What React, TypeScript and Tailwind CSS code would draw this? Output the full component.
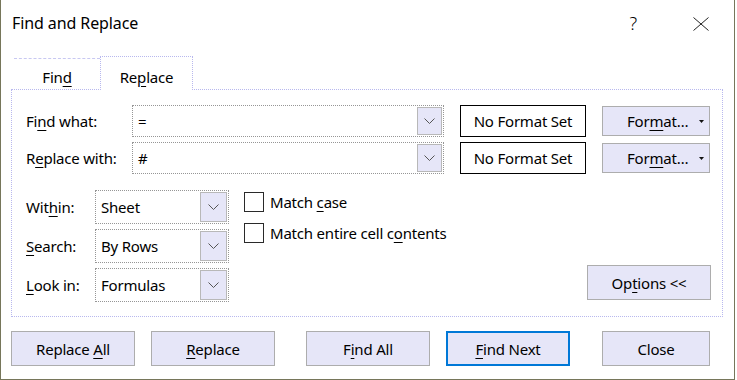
import React from 'react';

const fill = 'bg-[#e6e6f8]';

function U({ children }: { children: React.ReactNode }) {
  return <span className="underline decoration-1 underline-offset-[3px]">{children}</span>;
}

function Chevron() {
  return (
    <svg width="11" height="6" viewBox="0 0 11 6" fill="none">
      <path d="M0.5 0.5 L5.5 5.5 L10.5 0.5" stroke="#555" strokeWidth="1" />
    </svg>
  );
}

function Combo({ value, className, btnClass }: { value: string; className: string; btnClass: string }) {
  return (
    <div className={`flex items-stretch border border-dotted border-[#969696] bg-white p-px ${className}`}>
      <div className="flex flex-1 items-center pl-[4px]">{value}</div>
      <div className={`flex items-center justify-center border border-[#b8b8b8] ${fill} ${btnClass}`}>
        <Chevron />
      </div>
    </div>
  );
}

function Btn({
  children,
  className = '',
  focused = false,
}: {
  children: React.ReactNode;
  className?: string;
  focused?: boolean;
}) {
  return (
    <div
      className={`flex items-center justify-center ${
        focused ? 'border-2 border-[#0078d7]' : 'border border-[#adadad]'
      } ${fill} ${className}`}
    >
      {children}
    </div>
  );
}

function FormatBtn() {
  return (
    <div className={`flex h-[30px] w-[108px] items-center border border-[#adadad] pl-[24px] pr-[5px] ${fill}`}>
      <span>
        For<U>m</U>at…
      </span>
      <svg className="ml-auto" width="5" height="3" viewBox="0 0 5 3">
        <path d="M0 0 H5 L2.5 3 Z" fill="#111" />
      </svg>
    </div>
  );
}

function Check({ children }: { children: React.ReactNode }) {
  return (
    <div className="flex h-[20px] items-center">
      <div className="h-[20px] w-[20px] border border-[#2a2a2a] bg-white" />
      <span className="ml-[6px]">{children}</span>
    </div>
  );
}

export default function App() {
  return (
    <div className="h-[380px] w-[737px] overflow-hidden bg-white font-['Noto_Sans',sans-serif] text-[15px] leading-[20px] tracking-[-0.2px] text-black">
      <div className="flex h-[380px] w-[735px] flex-col border-b border-l border-r border-[#76765a] bg-white">
        {/* title bar */}
        <div className="flex h-[56px] items-start pl-[11px] pr-[25px] pt-[12px]">
          <span className="text-[16px] leading-[22px] tracking-[-0.1px]">Find and Replace</span>
          <span className="ml-auto text-[18px] font-light leading-[22px]">?</span>
          <svg className="ml-[56px] mt-[5px]" width="16" height="14" viewBox="0 0 16 14" fill="none">
            <path d="M0.5 0.5 L15.5 13.5 M15.5 0.5 L0.5 13.5" stroke="#222" strokeWidth="1" />
          </svg>
        </div>

        {/* tabs */}
        <div className="relative z-10 -mb-px flex h-[34px] pl-[13px]">
          <div className="mt-[2px] flex w-[86px] justify-center border-t border-dashed border-[#c8c8f2] pt-[8px]">
            <span>
              Fin<U>d</U>
            </span>
          </div>
          <div className="flex w-[93px] justify-center border-l border-r border-t border-dotted border-[#b8b8ee] bg-white pt-[10px]">
            <span>
              Re<U>p</U>lace
            </span>
          </div>
        </div>

        {/* panel */}
        <div className="ml-[10px] flex h-[228px] w-[712px] flex-col border border-dotted border-[#b8b8ee] pl-[14px] pr-[11px] pt-[15px]">
          <div className="flex h-[32px] items-center">
            <div className="w-[106px]">
              Fi<U>n</U>d what:
            </div>
            <Combo value="=" className="h-[32px] w-[312px]" btnClass="w-[25px]" />
            <div className="ml-[16px] flex h-[32px] w-[126px] items-center justify-center border border-black">
              No Format Set
            </div>
            <div className="ml-[16px]">
              <FormatBtn />
            </div>
          </div>
          <div className="mt-[5px] flex h-[32px] items-center">
            <div className="w-[106px]">
              R<U>e</U>place with:
            </div>
            <Combo value="#" className="h-[32px] w-[312px]" btnClass="w-[25px]" />
            <div className="ml-[16px] flex h-[32px] w-[126px] items-center justify-center border border-black">
              No Format Set
            </div>
            <div className="ml-[16px]">
              <FormatBtn />
            </div>
          </div>

          <div className="mt-[16px] flex h-[112px]">
            <div className="flex flex-col gap-[5px]">
              <div className="flex h-[34px] items-center">
                <div className="w-[69px]">
                  Wit<U>h</U>in:
                </div>
                <Combo value="Sheet" className="h-[34px] w-[134px]" btnClass="w-[27px]" />
              </div>
              <div className="flex h-[34px] items-center">
                <div className="w-[69px]">
                  <U>S</U>earch:
                </div>
                <Combo value="By Rows" className="h-[34px] w-[134px]" btnClass="w-[27px]" />
              </div>
              <div className="flex h-[34px] items-center">
                <div className="w-[69px]">
                  <U>L</U>ook in:
                </div>
                <Combo value="Formulas" className="h-[34px] w-[134px]" btnClass="w-[27px]" />
              </div>
            </div>

            <div className="ml-[15px] flex flex-col gap-[11px] pt-[2px]">
              <Check>
                Match <U>c</U>ase
              </Check>
              <Check>
                Match entire cell c<U>o</U>ntents
              </Check>
            </div>

            <div className="flex flex-1 items-end justify-end pb-[2px]">
              <Btn className="h-[35px] w-[124px]">
                <span>
                  Op<U>t</U>ions &lt;&lt;
                </span>
              </Btn>
            </div>
          </div>
        </div>

        {/* bottom buttons */}
        <div className="ml-[10px] mt-[14px] flex h-[35px]">
          <Btn className="w-[124px]">
            <span>
              Replace <U>A</U>ll
            </span>
          </Btn>
          <Btn className="ml-[16px] w-[124px]">
            <span>
              <U>R</U>eplace
            </span>
          </Btn>
          <Btn className="ml-[31px] w-[124px]">
            <span>
              F<U>i</U>nd All
            </span>
          </Btn>
          <Btn className="ml-[16px] w-[124px]" focused>
            <span>
              <U>F</U>ind Next
            </span>
          </Btn>
          <Btn className="ml-[32px] w-[108px]">
            <span>Close</span>
          </Btn>
        </div>
      </div>
    </div>
  );
}
